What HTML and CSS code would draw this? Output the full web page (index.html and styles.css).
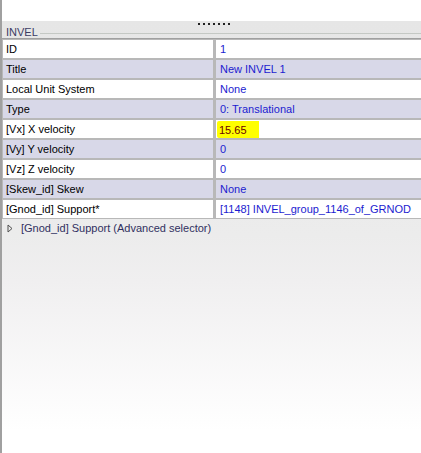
FILE: index.html
```html
<!DOCTYPE html>
<html lang="en">
<head>
    <meta charset="UTF-8">
    <title>INVEL</title>
    <link rel="stylesheet" href="styles.css">
</head>
<body>
    <div class="window">
        <div class="top-space"></div>
        <div class="panel">
            <div class="splitter">
                <span class="grip"></span><span class="grip"></span><span class="grip"></span><span class="grip"></span><span class="grip"></span><span class="grip"></span><span class="grip"></span>
            </div>
            <div class="group-title">
                <span class="group-name">INVEL</span>
                <span class="group-line"></span>
            </div>
            <div class="props">
                <div class="row">
                    <div class="cell label">ID</div>
                    <div class="cell value">1</div>
                </div>
                <div class="row alt">
                    <div class="cell label">Title</div>
                    <div class="cell value">New INVEL 1</div>
                </div>
                <div class="row">
                    <div class="cell label">Local Unit System</div>
                    <div class="cell value">None</div>
                </div>
                <div class="row alt">
                    <div class="cell label">Type</div>
                    <div class="cell value">0: Translational</div>
                </div>
                <div class="row">
                    <div class="cell label">[Vx] X velocity</div>
                    <div class="cell value"><span class="edited">15.65</span></div>
                </div>
                <div class="row alt">
                    <div class="cell label">[Vy] Y velocity</div>
                    <div class="cell value">0</div>
                </div>
                <div class="row">
                    <div class="cell label">[Vz] Z velocity</div>
                    <div class="cell value">0</div>
                </div>
                <div class="row alt">
                    <div class="cell label">[Skew_id] Skew</div>
                    <div class="cell value">None</div>
                </div>
                <div class="row">
                    <div class="cell label">[Gnod_id] Support*</div>
                    <div class="cell value">[1148] INVEL_group_1146_of_GRNOD</div>
                </div>
            </div>
            <div class="tree-item">
                <svg class="arrow" width="6" height="9" viewBox="0 0 6 9"><path d="M1 1 L5 4.5 L1 8 Z" fill="none" stroke="#505050" stroke-width="1"/></svg>
                <span>[Gnod_id] Support (Advanced selector)</span>
            </div>
            <div class="fill"></div>
        </div>
    </div>
</body>
</html>
```

FILE: styles.css
```css
html, body{
    margin: 0;
    padding: 0;
    height: 100%;
}
body{
    font-family: "Liberation Sans", Arial, sans-serif;
    font-size: 11px;
    background: #ffffff;
}
.window{
    height: 453px;
    display: flex;
    flex-direction: column;
    border-left: 2px solid #a0a0a0;
    overflow: hidden;
}
.top-space{
    height: 21px;
    background: #ffffff;
}
.panel{
    flex: 1;
    display: flex;
    flex-direction: column;
    background: linear-gradient(to bottom, #e6e6e6 0px, #ececec 215px, #f0eff0 260px, #ffffff 410px);
}
.splitter{
    height: 6px;
    display: flex;
    justify-content: center;
    align-items: center;
    gap: 3px;
    padding-left: 4px;
}
.grip{
    width: 2px;
    height: 2px;
    background: #202020;
}
.group-title{
    height: 11px;
    display: flex;
    align-items: center;
    padding-left: 4px;
    color: #3c3c64;
    font-size: 11px;
}
.group-name{
    line-height: 11px;
    padding-right: 2px;
}
.group-line{
    flex: 1;
    height: 1px;
    background: #c4c8c4;
    margin-top: 1px;
}
.props{
    border-top: 1px solid #a0a0a0;
    background: #b8b8b8;
    display: flex;
    flex-direction: column;
    gap: 2px;
    padding: 1px 0 1px 1px;
}
.row{
    height: 18px;
    display: flex;
    gap: 3px;
}
.cell{
    display: flex;
    align-items: center;
    white-space: nowrap;
    overflow: hidden;
    background: #ffffff;
}
.row.alt .cell{
    background: #d8d8e8;
}
.label{
    width: 207px;
    padding-left: 3px;
    color: #000000;
}
.value{
    flex: 1;
    padding-left: 4px;
    color: #1c1cd0;
}
.edited{
    background: #ffff00;
    color: #6a0000;
    padding: 3px 12px 2px 2px;
    margin-left: -3px;
    border-radius: 2px 0 0 2px;
}
.tree-item{
    height: 18px;
    display: flex;
    align-items: center;
    gap: 8px;
    padding-left: 5px;
    color: #303060;
}
.arrow{
    display: block;
}
.fill{
    flex: 1;
}
```
